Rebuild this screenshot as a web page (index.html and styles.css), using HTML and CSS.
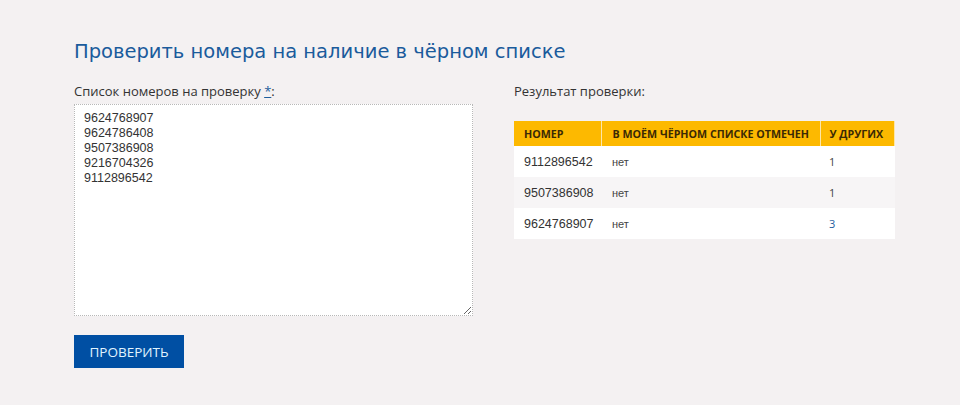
FILE: index.html
```html
<!DOCTYPE html>
<html lang="ru">
<head>
<meta charset="utf-8">
<link rel="stylesheet" href="styles.css">
</head>
<body>
<div class="page">
  <h1 class="title">Проверить номера на наличие в чёрном списке</h1>
  <div class="cols">
    <div class="left">
      <div class="label">Список номеров на проверку <a class="req" href="#">*</a>:</div>
      <textarea class="numbers">9624768907
9624786408
9507386908
9216704326
9112896542</textarea>
      <button class="btn">ПРОВЕРИТЬ</button>
    </div>
    <div class="right">
      <div class="label">Результат проверки:</div>
      <table class="result">
        <thead>
          <tr><th class="c1">НОМЕР</th><th class="c2">В МОЁМ ЧЁРНОМ СПИСКЕ ОТМЕЧЕН</th><th class="c3">У ДРУГИХ</th></tr>
        </thead>
        <tbody>
          <tr><td class="num">9112896542</td><td class="no">нет</td><td class="cnt">1</td></tr>
          <tr class="alt"><td class="num">9507386908</td><td class="no">нет</td><td class="cnt">1</td></tr>
          <tr><td class="num">9624768907</td><td class="no">нет</td><td class="cnt link">3</td></tr>
        </tbody>
      </table>
    </div>
  </div>
</div>
</body>
</html>
```
FILE: styles.css
```css
html, body {
  margin: 0;
  padding: 0;
  background: #f4f1f2;
}
.page {
  padding: 37px 0 0 74px;
  font-family: "Open Sans", "Liberation Sans", sans-serif;
  color: #333;
}
.title {
  margin: 0 0 15px 0;
  font-family: "Comic Sans MS", "DejaVu Sans", sans-serif;
  font-weight: normal;
  font-size: 19.5px;
  line-height: 30px;
  color: #1a5b9c;
}
.cols {
  display: flex;
  gap: 41px;
}
.left {
  width: 399px;
  display: flex;
  flex-direction: column;
  align-items: flex-start;
}
.label {
  font-size: 13px;
  line-height: 18px;
  color: #333;
  margin-bottom: 4px;
}
.req {
  color: #1e5d9c;
  text-decoration: underline;
}
.numbers {
  box-sizing: border-box;
  width: 399px;
  height: 212px;
  border: 1px dotted #b8b8b8;
  background: #fff;
  padding: 6px 9px;
  font-family: "Liberation Sans", Arial, sans-serif;
  font-size: 12.5px;
  line-height: 15px;
  color: #333;
  resize: vertical;
  margin: 0;
}
.btn {
  margin-top: 19px;
  width: 110px;
  height: 33px;
  border: 0;
  background: #004fa3;
  color: #e0f4ff;
  font-family: "Open Sans", "Liberation Sans", sans-serif;
  font-size: 13.5px;
  padding: 0;
}
.right {
  width: 381px;
}
.right .label {
  margin-bottom: 21px;
}
.result {
  width: 381px;
  border-collapse: collapse;
  font-size: 12px;
}
.result th {
  background: #fdb900;
  color: #3b2a05;
  font-weight: bold;
  font-size: 10.7px;
  text-align: left;
  height: 25px;
  padding: 0 0 0 10px;
  border-right: 1px solid #fde6a8;
  box-sizing: border-box;
}
.result th.c1 { width: 87px; }
.result th.c2 { width: 219px; padding-left: 11px; }
.result th.c3 { padding-left: 9px; }
.result td {
  height: 31px;
  padding: 0 0 0 10px;
  background: #fff;
}
.result tr.alt td {
  background: #f7f5f6;
}
.result td.num {
  font-family: "Liberation Sans", Arial, sans-serif;
  font-size: 12.5px;
  color: #333;
}
.result td.no {
  font-family: "Liberation Sans", Arial, sans-serif;
  font-size: 11px;
  color: #444;
  padding-left: 11px;
}
.result td.cnt {
  font-size: 11px;
  color: #444;
  padding-left: 9px;
}
.result td.link {
  color: #1e5d9c;
}
```
